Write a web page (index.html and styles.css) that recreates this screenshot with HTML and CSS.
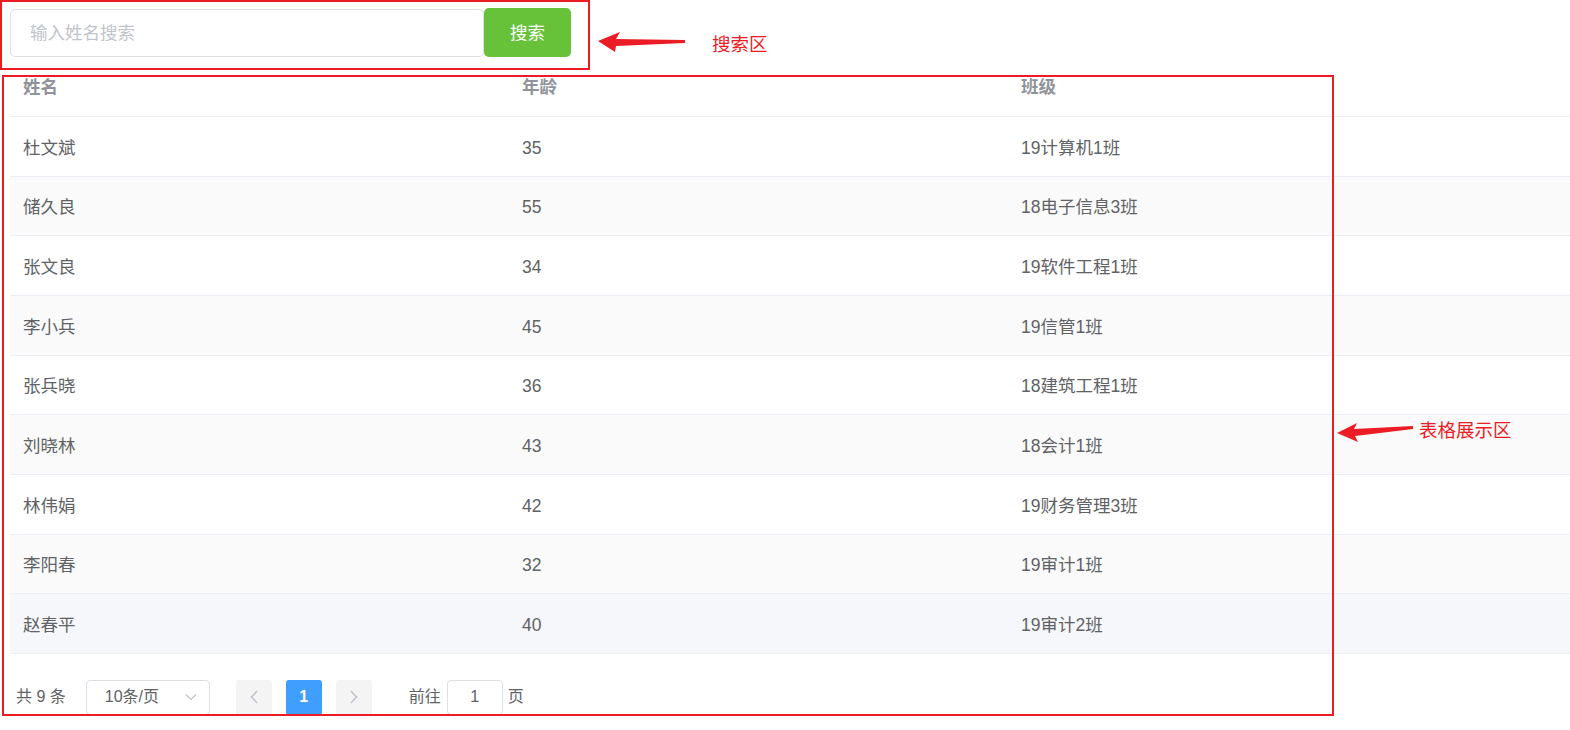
FILE: index.html
```html
<!DOCTYPE html>
<html lang="zh">
<head>
<meta charset="utf-8">
<title>学生查询</title>
<link rel="stylesheet" href="styles.css">
</head>
<body>
<div class="page">
  <div class="search">
    <div class="search-input">输入姓名搜索</div>
    <button class="search-btn">搜索</button>
  </div>

  <div class="table">
    <div class="row head">
      <div class="cell">姓名</div><div class="cell">年龄</div><div class="cell">班级</div><div class="cell"></div>
    </div>
    <div class="row"><div class="cell">杜文斌</div><div class="cell">35</div><div class="cell">19计算机1班</div><div class="cell"></div></div>
    <div class="row stripe"><div class="cell">储久良</div><div class="cell">55</div><div class="cell">18电子信息3班</div><div class="cell"></div></div>
    <div class="row"><div class="cell">张文良</div><div class="cell">34</div><div class="cell">19软件工程1班</div><div class="cell"></div></div>
    <div class="row stripe"><div class="cell">李小兵</div><div class="cell">45</div><div class="cell">19信管1班</div><div class="cell"></div></div>
    <div class="row"><div class="cell">张兵晓</div><div class="cell">36</div><div class="cell">18建筑工程1班</div><div class="cell"></div></div>
    <div class="row stripe"><div class="cell">刘晓林</div><div class="cell">43</div><div class="cell">18会计1班</div><div class="cell"></div></div>
    <div class="row"><div class="cell">林伟娟</div><div class="cell">42</div><div class="cell">19财务管理3班</div><div class="cell"></div></div>
    <div class="row stripe"><div class="cell">李阳春</div><div class="cell">32</div><div class="cell">19审计1班</div><div class="cell"></div></div>
    <div class="row hover"><div class="cell">赵春平</div><div class="cell">40</div><div class="cell">19审计2班</div><div class="cell"></div></div>
  </div>

  <div class="pager">
    <span class="total">共 9 条</span>
    <div class="sizes">
      <span>10条/页</span>
      <svg class="caret" width="12" height="8" viewBox="0 0 12 8"><polyline points="1,1.5 6,6.5 11,1.5" fill="none" stroke="#c0c4cc" stroke-width="1.2"/></svg>
    </div>
    <div class="pbtn prev"><svg width="8" height="14" viewBox="0 0 8 14"><polyline points="7,1 1.5,7 7,13" fill="none" stroke="#c0c4cc" stroke-width="1.6"/></svg></div>
    <div class="pbtn active">1</div>
    <div class="pbtn next"><svg width="8" height="14" viewBox="0 0 8 14"><polyline points="1,1 6.5,7 1,13" fill="none" stroke="#c0c4cc" stroke-width="1.6"/></svg></div>
    <span class="goto">前往</span>
    <div class="jump">1</div>
    <span class="unit">页</span>
  </div>

  <div class="mark mark-search"></div>
  <div class="mark mark-table"></div>
  <svg class="arrow arrow-search" width="90" height="24" viewBox="0 0 90 24">
    <polygon points="0,10 22,1 18,8 87,9 87,12 18,15 17,21" fill="#ec1c24"/>
  </svg>
  <span class="label label-search">搜索区</span>
  <svg class="arrow arrow-table" width="80" height="26" viewBox="0 0 80 26">
    <polygon points="0,14 20,4 17,10 76,7 76,10 18,17 21,23" fill="#ec1c24"/>
  </svg>
  <span class="label label-table">表格展示区</span>
</div>
</body>
</html>
```

FILE: styles.css
```css
html, body {
  margin: 0;
  padding: 0;
  background: #ffffff;
}

body {
  font-family: "Liberation Sans", "Noto Sans CJK SC", sans-serif;
  color: #606266;
}

.page {
  position: relative;
  width: 1570px;
  height: 730px;
  overflow: hidden;
}

/* search */
.search {
  display: flex;
  align-items: flex-start;
  padding: 8px 0 0 10px;
  height: 49px;
}

.search-input {
  box-sizing: border-box;
  width: 474px;
  height: 48px;
  margin-top: 1px;
  border: 1px solid #dcdfe6;
  border-radius: 5px;
  padding-left: 19px;
  font-size: 17.5px;
  line-height: 46px;
  color: #c0c4cc;
}

.search-btn {
  box-sizing: border-box;
  width: 87px;
  height: 49px;
  border: none;
  border-radius: 5px;
  background: #67c23a;
  color: #ffffff;
  font-family: "Liberation Sans", "Noto Sans CJK SC", sans-serif;
  font-size: 17.5px;
  line-height: 24px;
  padding: 0;
  margin-left: 0;
}

/* table */
.table {
  margin-left: 10px;
  width: 1560px;
}

.row {
  box-sizing: border-box;
  display: grid;
  grid-template-columns: 499px 499px 499px 1fr;
  height: 59.67px;
  border-bottom: 1px solid #ebeef5;
  background: #ffffff;
}

.row.head {
  height: 60px;
}

.row.stripe {
  background: #fafafa;
}

.row.hover {
  background: #f5f7fa;
}

.cell {
  display: flex;
  align-items: center;
  padding-left: 13px;
  padding-top: 3px;
  font-size: 17.5px;
  line-height: 24px;
  color: #606266;
  white-space: nowrap;
}

.head .cell {
  padding-top: 0;
  color: #909399;
  font-weight: bold;
}

/* pager */
.pager {
  display: flex;
  align-items: center;
  margin-top: 26px;
  padding-left: 16px;
  height: 35px;
  font-size: 16px;
  line-height: 22px;
  color: #606266;
}

.total {
  margin-right: 20px;
}

.sizes {
  box-sizing: border-box;
  width: 124px;
  height: 35px;
  border: 1px solid #dcdfe6;
  border-radius: 4px;
  display: flex;
  align-items: center;
  padding-left: 18px;
  padding-right: 12px;
  justify-content: space-between;
  margin-right: 26px;
}

.pbtn {
  box-sizing: border-box;
  width: 36px;
  height: 35px;
  border-radius: 3px;
  background: #f4f4f5;
  display: flex;
  align-items: center;
  justify-content: center;
  margin-right: 14px;
  font-weight: bold;
  font-size: 16px;
}

.pbtn.active {
  background: #409eff;
  color: #ffffff;
}

.pbtn.next {
  margin-right: 37px;
}

.goto {
  margin-right: 6px;
}

.jump {
  box-sizing: border-box;
  width: 56px;
  height: 35px;
  border: 1px solid #dcdfe6;
  border-radius: 4px;
  display: flex;
  align-items: center;
  justify-content: center;
  margin-right: 5px;
}

/* annotations */
.mark {
  position: absolute;
  box-sizing: border-box;
  border: 2px solid #ec1c24;
}

.mark-search {
  left: 0;
  top: 0;
  width: 590px;
  height: 70px;
}

.mark-table {
  left: 2px;
  top: 75px;
  width: 1332px;
  height: 641px;
}

.arrow {
  position: absolute;
}

.arrow-search {
  left: 598px;
  top: 31px;
}

.arrow-table {
  left: 1337px;
  top: 419px;
}

.label {
  position: absolute;
  color: #ec1c24;
  font-size: 18.5px;
  line-height: 20px;
  white-space: nowrap;
}

.label-search {
  left: 712px;
  top: 35px;
}

.label-table {
  left: 1419px;
  top: 421px;
}
```
